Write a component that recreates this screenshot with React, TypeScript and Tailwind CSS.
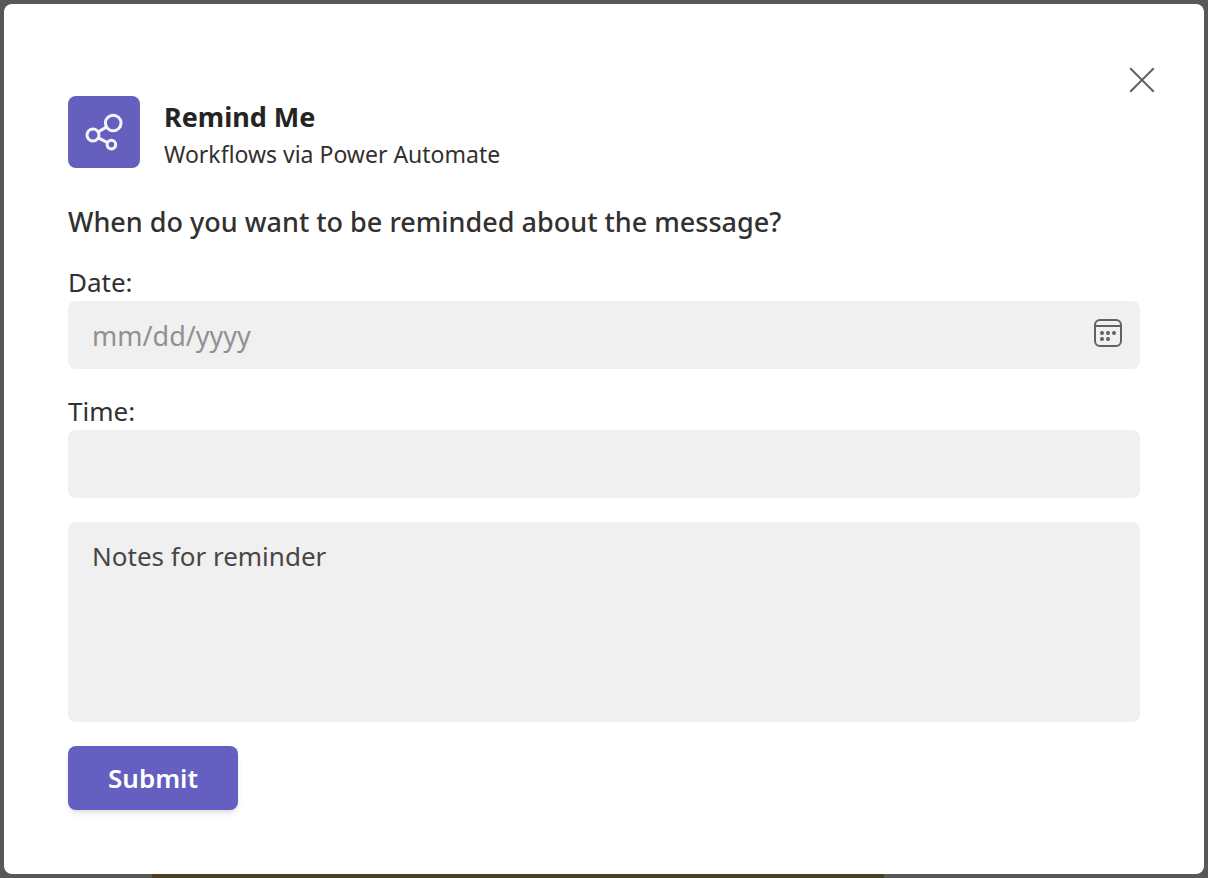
function WorkflowsIcon() {
  return (
    <svg viewBox="0 0 72 72" className="size-18 shrink-0 rounded-lg bg-[#6560be]" aria-hidden="true">
      <g fill="none" stroke="#f6f5ff" strokeWidth="3">
        <circle cx="45.2" cy="27" r="7.8" />
        <circle cx="25" cy="39" r="6" />
        <circle cx="43.4" cy="48.6" r="4.3" />
        <path d="M30.2 35.9 38.6 31M30.3 41.8l9.3 4.8" />
      </g>
    </svg>
  );
}

function CalendarIcon() {
  return (
    <svg viewBox="0 0 28 28" className="size-7" aria-hidden="true">
      <rect x="1" y="1" width="26" height="26" rx="5" fill="none" stroke="#616161" strokeWidth="2" />
      <path d="M1 7h26" stroke="#616161" strokeWidth="2" />
      <g fill="#616161">
        <circle cx="8" cy="14" r="2" />
        <circle cx="14" cy="14" r="2" />
        <circle cx="20" cy="14" r="2" />
        <circle cx="8" cy="20" r="2" />
        <circle cx="14" cy="20" r="2" />
      </g>
    </svg>
  );
}

export default function App() {
  return (
    <div className="relative flex min-h-screen flex-col bg-[#585857] p-1 font-['Noto_Sans','Open_Sans',sans-serif] text-[#323130]">
      <div className="absolute bottom-0 left-[152px] right-[324px] h-1 bg-[#4a4024]" />
      <main role="dialog" aria-labelledby="title" className="relative flex-1 rounded-lg bg-white pt-[62px] pb-12">
        <div className="flex justify-end pr-12">
          <button type="button" aria-label="Close" className="size-7">
            <svg viewBox="0 0 28 28" className="size-7" aria-hidden="true">
              <path d="M2.2 2.2 25.8 25.8M25.8 2.2 2.2 25.8" fill="none" stroke="#616161" strokeWidth="2" />
            </svg>
          </button>
        </div>
        <div className="px-16 pt-[2px]">
          <header className="flex gap-6">
            <WorkflowsIcon />
            <div className="pt-0.5">
              <h1 id="title" className="text-[27px] leading-[38px] font-bold text-[#242424]">Remind Me</h1>
              <p className="text-[23px] leading-9">Workflows via Power Automate</p>
            </div>
          </header>
          <form onSubmit={(e) => e.preventDefault()}>
            <h2 className="pt-8 text-[27px] leading-9 font-medium">When do you want to be reminded about the message?</h2>
            <label htmlFor="date" className="block pt-6 text-[26px] leading-[37px]">Date:</label>
            <div className="flex h-[68px] items-center rounded-lg bg-[#f0f0f0] pr-[18px]">
              <input
                id="date"
                type="text"
                placeholder="mm/dd/yyyy"
                className="h-full min-w-0 flex-1 bg-transparent pl-6 text-[27px] outline-none placeholder:text-[#919191]"
              />
              <button type="button" aria-label="Choose a date" className="mb-1">
                <CalendarIcon />
              </button>
            </div>
            <label htmlFor="time" className="block pt-6 text-[26px] leading-[37px]">Time:</label>
            <input id="time" type="text" className="block h-[68px] w-full rounded-lg bg-[#f0f0f0] px-6 text-[27px] outline-none" />
            <textarea
              aria-label="Notes for reminder"
              placeholder="Notes for reminder"
              className="mt-6 block h-[200px] w-full resize-none rounded-lg bg-[#f0f0f0] px-6 py-4 text-[26px] leading-9 outline-none placeholder:text-[#484644]"
            />
            <button type="submit" className="mt-6 h-16 rounded-lg bg-[#645fc0] px-10 text-[26px] font-semibold text-white shadow-md">
              Submit
            </button>
          </form>
        </div>
      </main>
    </div>
  );
}
